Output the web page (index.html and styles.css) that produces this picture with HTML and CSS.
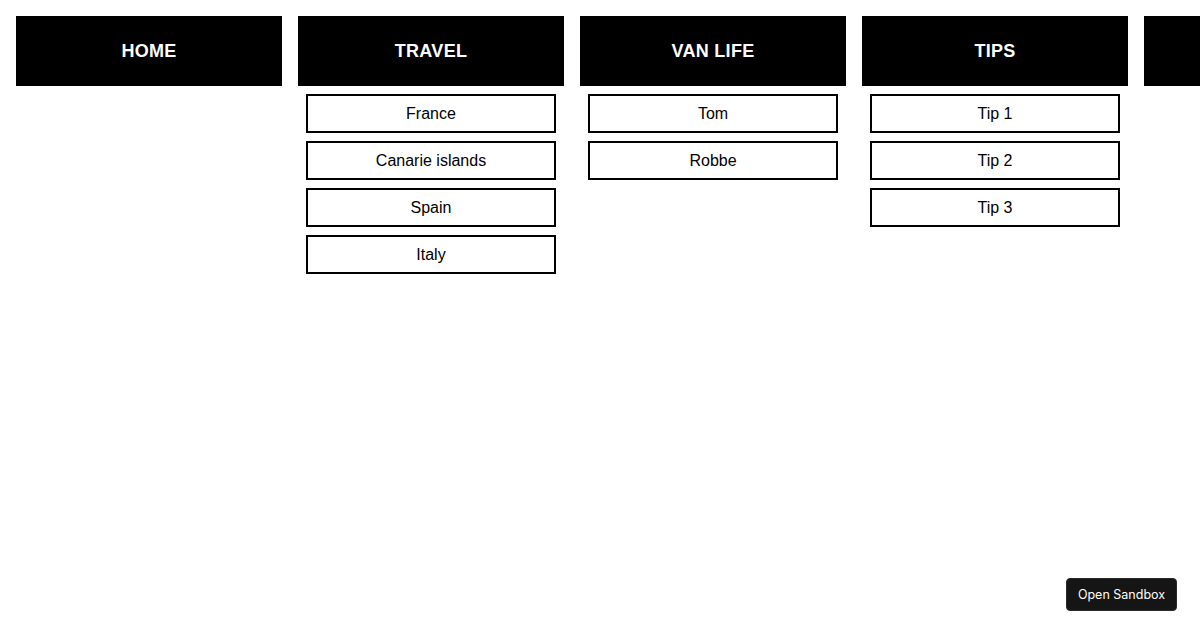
FILE: index.html
```html
<!DOCTYPE html>
<html>
<head>
<meta charset="utf-8">
<link rel="stylesheet" href="styles.css">
</head>
<body>
<nav class="menu">
  <div class="col">
    <div class="head">HOME</div>
  </div>
  <div class="col">
    <div class="head">TRAVEL</div>
    <div class="sub">
      <div class="item">France</div>
      <div class="item">Canarie islands</div>
      <div class="item">Spain</div>
      <div class="item">Italy</div>
    </div>
  </div>
  <div class="col">
    <div class="head">VAN LIFE</div>
    <div class="sub">
      <div class="item">Tom</div>
      <div class="item">Robbe</div>
    </div>
  </div>
  <div class="col">
    <div class="head">TIPS</div>
    <div class="sub">
      <div class="item">Tip 1</div>
      <div class="item">Tip 2</div>
      <div class="item">Tip 3</div>
    </div>
  </div>
  <div class="col">
    <div class="head"></div>
  </div>
</nav>
<button class="sandbox">Open Sandbox</button>
</body>
</html>
```
FILE: styles.css
```css
html, body {
  margin: 0;
  padding: 0;
  background: #fff;
  width: 1200px;
  height: 630px;
  overflow: hidden;
}
body {
  font-family: "Liberation Sans", Arial, sans-serif;
  position: relative;
}
.menu {
  display: flex;
  gap: 16px;
  padding: 16px;
  width: 1500px;
}
.col {
  width: 266px;
  flex: 0 0 266px;
}
.head {
  height: 70px;
  background: #000;
  color: #fff;
  font-weight: bold;
  font-size: 18px;
  display: flex;
  align-items: center;
  justify-content: center;
  letter-spacing: 0.3px;
}
.sub {
  display: flex;
  flex-direction: column;
  gap: 8px;
  padding: 8px;
}
.item {
  height: 39px;
  box-sizing: border-box;
  border: 2px solid #000;
  display: flex;
  align-items: center;
  justify-content: center;
  font-size: 16px;
  color: #000;
}
.sandbox {
  position: absolute;
  left: 1066px;
  top: 578px;
  width: 111px;
  height: 33px;
  background: #151515;
  color: #fff;
  border: 1px solid #2a2a2a;
  border-radius: 4px;
  font-family: Inter, "Liberation Sans", sans-serif;
  font-size: 12.5px;
  padding: 0;
}
```
